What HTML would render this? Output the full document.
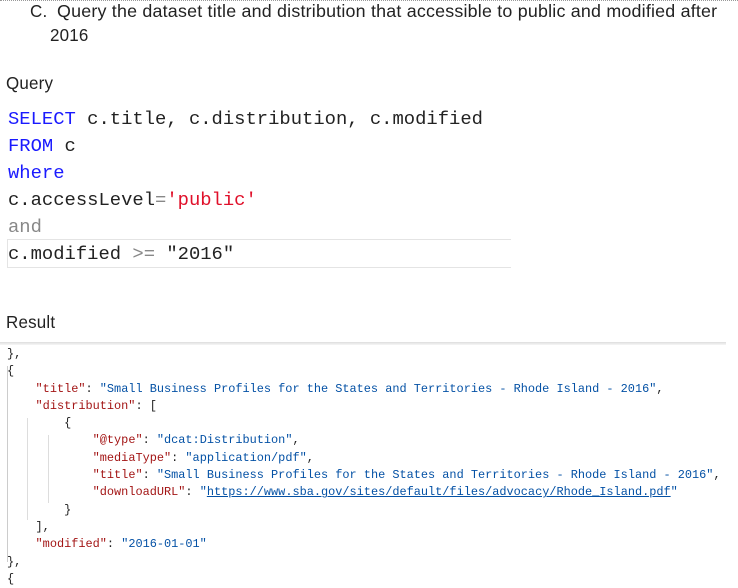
<!DOCTYPE html>
<html><head><meta charset="utf-8"><style>
body{margin:0;width:738px;height:580px;background:#fff;position:relative;overflow:hidden;font-family:"Liberation Sans",Arial,sans-serif;color:#222}
.a{position:absolute;white-space:pre}
.h{font-size:17.5px;letter-spacing:0.2px;transform:scaleX(0.97);transform-origin:0 0}
.h2{font-size:17.5px;letter-spacing:0.2px;transform:scaleX(1.02);transform-origin:0 0}
.c{font-family:"Liberation Mono",monospace;font-size:18.85px;line-height:27px;color:#222}
.k{color:#1a1aff}.s{color:#e0102a}.g{color:#888}
.j{font-family:"Liberation Mono",monospace;font-size:11.9px;color:#222}
.r{color:#a31515}.b{color:#0451a5}
</style></head><body>
<div style="position:absolute;left:0;top:0;width:738px;border-top:1px dotted #999"></div>
<div class="a h" style="left:30px;top:1px">C.</div>
<div class="a h2" style="left:57px;top:1px">Query the dataset title and distribution that accessible to public and modified after</div>
<div class="a h" style="left:50px;top:25px">2016</div>
<div class="a h" style="left:6px;top:73px">Query</div>
<div style="position:absolute;left:7px;top:239px;width:503px;height:27px;border:1px solid #e4e4e4;border-right:none"></div>
<div class="a c" style="left:8px;top:106px"><span class="k">SELECT</span> c.title, c.distribution, c.modified
<span class="k">FROM</span> c
<span class="k">where</span>
c.accessLevel<span class="g">=</span><span class="s">'public'</span>
<span class="g">and</span>
c.modified <span class="g">&gt;=</span> "2016"</div>
<div class="a h" style="left:6px;top:312px">Result</div>
<div style="position:absolute;left:0;top:342px;width:726px;height:3px;background:linear-gradient(#ddd,#f6f6f6)"></div>
<div style="position:absolute;left:7px;top:366px;width:1px;height:196px;background:#ccc"></div>
<div style="position:absolute;left:27px;top:418px;width:1px;height:102px;background:#ddd"></div>
<div style="position:absolute;left:48px;top:435px;width:1px;height:68px;background:#ddd"></div>
<div class="a j" style="left:7px;top:346px;line-height:17.3px">},
{
    <span class="r">"title"</span>: <span class="b">"Small Business Profiles for the States and Territories - Rhode Island - 2016"</span>,
    <span class="r">"distribution"</span>: [
        {
            <span class="r">"@type"</span>: <span class="b">"dcat:Distribution"</span>,
            <span class="r">"mediaType"</span>: <span class="b">"application/pdf"</span>,
            <span class="r">"title"</span>: <span class="b">"Small Business Profiles for the States and Territories - Rhode Island - 2016"</span>,
            <span class="r">"downloadURL"</span>: <span class="b">"<span style="text-decoration:underline;text-decoration-color:#0451a5">https://www.sba.gov/sites/default/files/advocacy/Rhode_Island.pdf</span>"</span>
        }
    ],
    <span class="r">"modified"</span>: <span class="b">"2016-01-01"</span>
},
{</div>
</body></html>
